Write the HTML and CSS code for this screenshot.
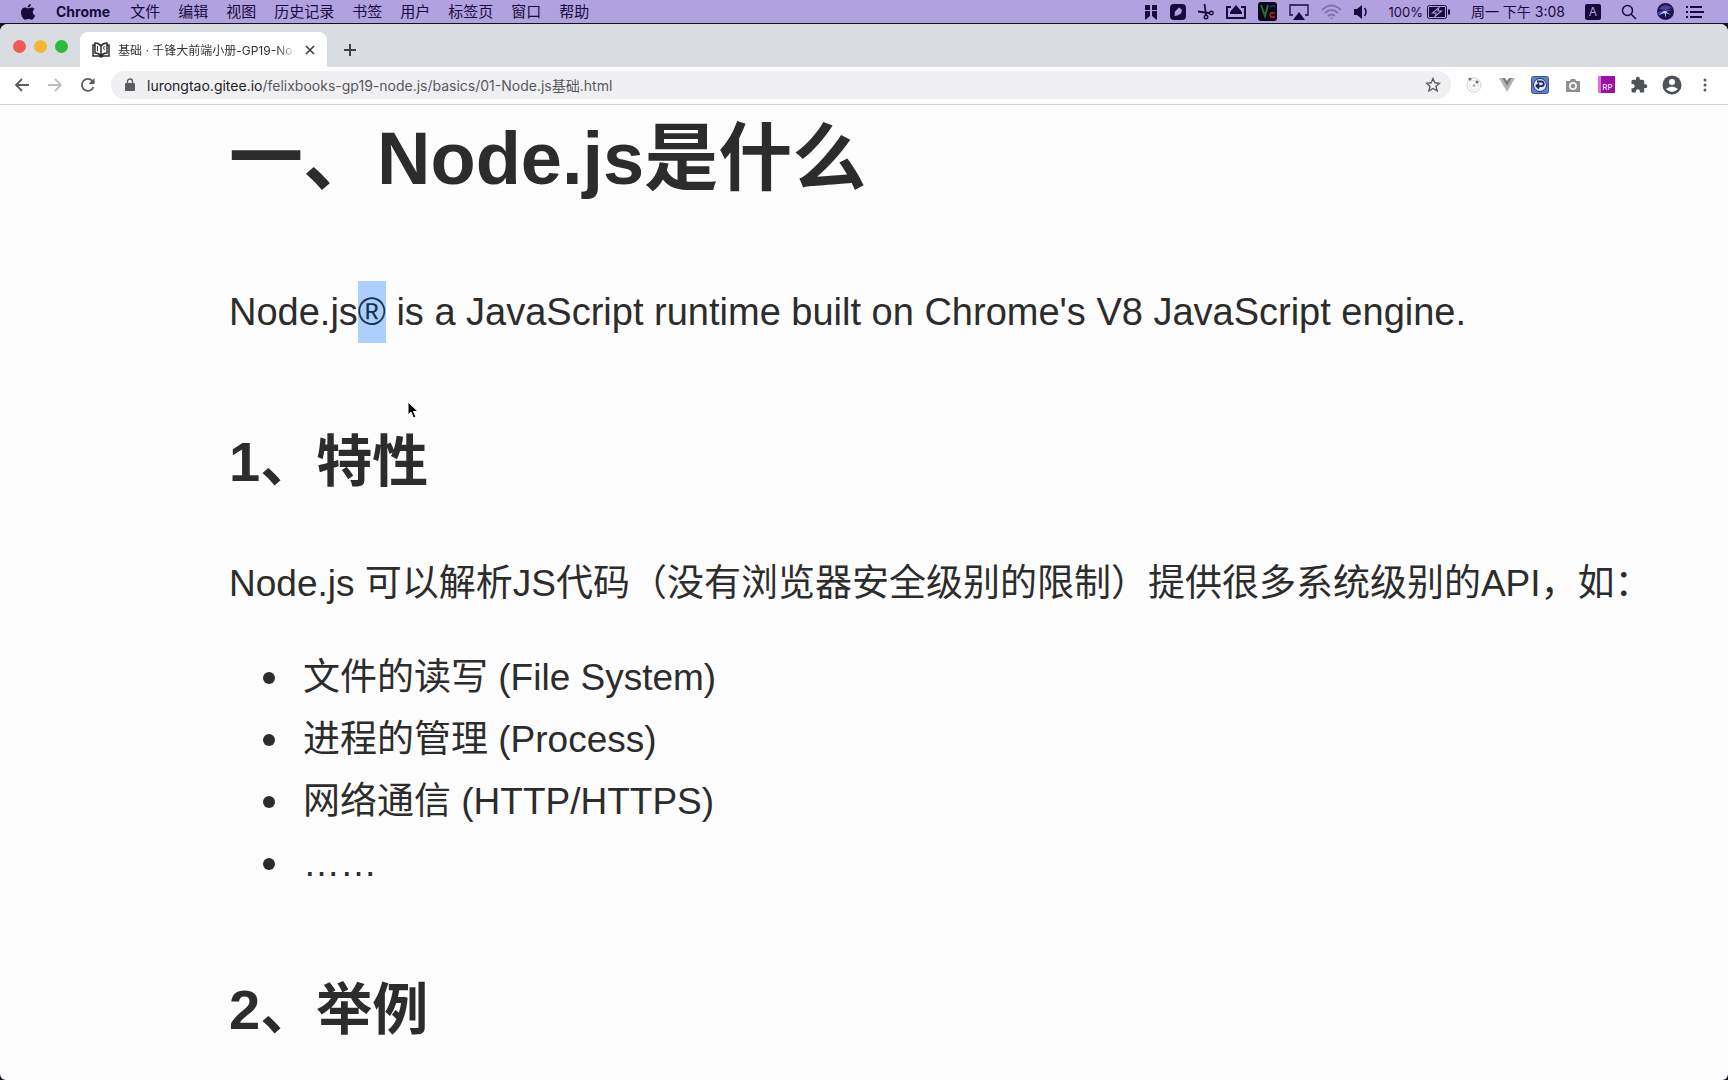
FILE: index.html
```
<!DOCTYPE html>
<html lang="zh-CN">
<head>
<meta charset="utf-8">
<title>基础 · 千锋大前端小册-GP19-Node.js</title>
<link rel="stylesheet" href="styles.css">
</head>
<body>
<header class="menubar">
  <nav class="menus" aria-label="菜单">
    <button class="apple" aria-label="Apple"><svg width="16" height="18" viewBox="0 0 16 18"><path fill="currentColor" d="M11 1c.1 1.900-1.500 3.500-3.300 3.500C7.500 2.700 9.200 1.100 11 1zM8.200 5.300c.8 0 1.800-.9 3.300-.9 1.200 0 2.400.6 3.100 1.700-2.700 1.600-2.300 5.200.5 6.300-.6 1.700-2 4.400-3.700 4.400-1.100 0-1.500-.7-3-.7s-1.900.7-3 .7C3.300 16.900 1 13 1 9.600 1 6.200 3 4.500 5 4.500c1.400 0 2.400.8 3.200.8z"/></svg></button>
    <button class="app-name">Chrome</button>
    <button>文件</button>
    <button>编辑</button>
    <button>视图</button>
    <button>历史记录</button>
    <button>书签</button>
    <button>用户</button>
    <button>标签页</button>
    <button>窗口</button>
    <button>帮助</button>
  </nav>
  <div class="tray">
    <div class="tray-icons">
      <svg width="14" height="18" viewBox="0 0 14 18"><path fill="currentColor" d="M1 2h5v5H1zM8 2h5v5H8zM1 8h5v5l-5 4zM8 8h5v9l-5-4z"/></svg>
      <svg width="16" height="16" viewBox="0 0 16 16"><rect width="16" height="16" rx="4" fill="currentColor"/><path fill="#b1a1de" d="M4.500 12l.5-4.500 4-4 3 2.500-1 3.500-3.500 2z"/></svg>
      <svg width="16" height="16" viewBox="0 0 16 16" fill="none" stroke="currentColor" stroke-width="1.800"><path d="M0 7.500l11 1.500M6.500 0L8 11"/><circle cx="13.300" cy="9" r="1.800" stroke-width="1.400"/><circle cx="8" cy="13" r="1.800" stroke-width="1.400"/></svg>
      <svg width="20" height="16" viewBox="0 0 20 16"><path d="M5 3H1v11h18V3h-4" fill="none" stroke="currentColor" stroke-width="2"/><path fill="currentColor" d="M10 1l6 7v2H4V8z"/></svg>
      <svg width="19" height="19" viewBox="0 0 19 19"><rect width="19" height="19" rx="3" fill="#0b0718"/><path d="M3 3l4 11 3-11" fill="none" stroke="#2c6b31" stroke-width="2"/><path d="M12 5q3-2 5 0" fill="none" stroke="#252577" stroke-width="2"/><path d="M17 11h-4q-2 2 0 4h4" fill="none" stroke="#8d2028" stroke-width="2"/></svg>
      <svg width="20" height="16" viewBox="0 0 20 16"><path d="M4 11H1V1h18v10h-3" fill="none" stroke="currentColor" stroke-width="1.300"/><path fill="currentColor" d="M10 8l6 8H4z"/></svg>
      <svg class="dim" width="21" height="16" viewBox="0 0 21 16" fill="none" stroke="currentColor" stroke-width="2"><path d="M1 6q9.500-9 19 0M4 9q6.500-6 13 0M7 12q3.500-3 7 0"/><circle cx="10.500" cy="14" r="1" fill="currentColor" stroke="none"/></svg>
      <svg class="volume" width="14" height="14" viewBox="0 0 14 14"><path fill="currentColor" d="M0 4h3l5-4v14l-5-4H0z"/><path d="M10.500 3q3 4 0 8" fill="none" stroke="currentColor" stroke-width="1.500"/></svg>
    </div>
    <span class="power">100%
      <svg width="24" height="14" viewBox="0 0 24 14"><rect x=".5" y=".5" width="19" height="13" rx="2" fill="none" stroke="currentColor"/><rect x="2" y="2" width="16" height="10" fill="currentColor"/><path fill="#b1a1de" d="M13 1L4 8.500h4.500L7 13l9-7.500h-4.500z"/><path fill="currentColor" d="M21 4.500h2v5h-2zM11 4L7 7.500h3L9 10l4-3.500h-3z"/></svg>
    </span>
    <time class="clock">周一 下午 3:08</time>
    <span class="input-source">A</span>
    <svg width="16" height="16" viewBox="0 0 16 16" fill="none" stroke="currentColor" stroke-width="1.500"><circle cx="6.500" cy="6.500" r="5"/><path d="M10 10l5 5"/></svg>
    <div class="tray-icons">
      <svg width="17" height="17" viewBox="0 0 17 17"><circle cx="8.500" cy="8.500" r="8.500" fill="#1d1250"/><path d="M2 6q6-7 13-1l-6 2z" fill="#5a3fa0"/><path d="M1 9l7-2-6 6z" fill="#3554b5"/><path d="M2 12l5-4 8-1-6 1.500 5 3.500-5-2 0 5-1.500-5z" fill="#c6d1f8"/></svg>
      <svg width="18" height="12" viewBox="0 0 18 12"><path fill="currentColor" d="M0 0h2v2H0zM4 0h12v2H4zM0 5h2v2H0zM4 5h14v2H4zM0 10h2v2H0zM4 10h12v2H4z"/></svg>
    </div>
  </div>
</header>

<div class="browser">
  <div class="tabstrip">
    <div class="lights">
      <button class="light red" aria-label="关闭窗口"></button>
      <button class="light yellow" aria-label="最小化"></button>
      <button class="light green" aria-label="缩放"></button>
    </div>
    <div class="tab">
      <svg width="18" height="16" viewBox="0 0 18 16" fill="none" stroke="#2d2d2d" stroke-width="1.500"><path d="M9 4Q7 1 3 1v10q4 0 6 3 2-3 6-3V1q-4 0-6 3zM9 4v10M3 3H1v11h6l2 1 2-1h6V3h-2"/><path d="M5.500 4v5M12.500 4L11.500 6l1 2" stroke-width="1"/></svg>
      <span class="tab-title">基础 · 千锋大前端小册-GP19-No</span>
      <button class="tab-close" aria-label="关闭标签页"><svg width="10" height="10" viewBox="0 0 10 10"><path d="M1 1l8 8M9 1L1 9" stroke="#3c4043" stroke-width="1.600"/></svg></button>
    </div>
    <button class="new-tab" aria-label="新标签页"><svg width="14" height="14" viewBox="0 0 14 14"><path d="M7 1v12M1 7h12" stroke="#3c4043" stroke-width="2"/></svg></button>
  </div>

  <div class="toolbar">
    <button class="tool" aria-label="后退"><svg width="14" height="14" viewBox="0 0 14 14" fill="none" stroke="#5a5d60" stroke-width="1.800"><path d="M14 7H1.500M7 1L1 7l6 6"/></svg></button>
    <button class="tool" aria-label="前进" disabled><svg width="14" height="14" viewBox="0 0 14 14" fill="none" stroke="#bcbec1" stroke-width="1.800"><path d="M0 7h12.500M7 1l6 6-6 6"/></svg></button>
    <button class="tool" aria-label="重新加载"><svg width="16" height="16" viewBox="0 0 16 16"><path d="M13.500 10A6 6 0 1 1 12.500 4L14 5.500" fill="none" stroke="#5a5d60" stroke-width="1.800"/><path d="M14.500 1v6h-6z" fill="#5a5d60"/></svg></button>
    <div class="omnibox">
      <svg width="10" height="13" viewBox="0 0 10 13"><rect y="5" width="10" height="8" rx="1" fill="#5a5d60"/><path d="M2.500 5V3.500a2.500 2.500 0 0 1 5 0V5" fill="none" stroke="#5a5d60" stroke-width="1.400"/></svg>
      <a class="url" href="#top"><span class="host">lurongtao.gitee.io</span>/felixbooks-gp19-node.js/basics/01-Node.js基础.html</a>
      <button aria-label="添加书签"><svg width="16" height="16" viewBox="0 0 16 16"><path d="M8 1.500l1.900 4.300 4.600.4-3.500 3.100 1.100 4.600L8 11.500l-4.100 2.400L5 9.300 1.500 6.200l4.600-.4z" fill="none" stroke="#5a5d60" stroke-width="1.400"/></svg></button>
    </div>
    <button class="tool" aria-label="React"><svg width="18" height="18" viewBox="0 0 18 18"><circle cx="9" cy="9" r="7" fill="none" stroke="#d2d2d2"/><circle cx="9" cy="9" r="4.500" fill="none" stroke="#dedede"/><circle cx="9" cy="9.500" r="1.600" fill="#b5b5b5"/><circle cx="5" cy="3" r="1.600" fill="#777"/><circle cx="12" cy="6" r="1.500" fill="#666"/></svg></button>
    <button class="tool" aria-label="Vue"><svg width="18" height="16" viewBox="0 0 18 16"><path d="M1 1h16L9 15z" fill="#b3b3b3"/><path d="M4.500 1h9L9 9z" fill="#7b7b7b"/><path d="M7 1h4L9 4z" fill="#fff"/></svg></button>
    <button class="tool" aria-label="同步"><svg width="18" height="18" viewBox="0 0 18 18"><rect x=".5" y=".5" width="17" height="17" rx="2" fill="#5d80cf" stroke="#40528e"/><circle cx="9" cy="9" r="6.500" fill="#dfe7fa" stroke="#1f2f69"/><path d="M6 5.500h4.500a2.300 2.300 0 0 1 0 4.600H5M8 7.500L5.500 10 8 12.500" fill="none" stroke="#18265b" stroke-width="1.800"/></svg></button>
    <button class="tool" aria-label="截图"><svg width="16" height="14" viewBox="0 0 16 14"><path d="M1 3h3.500L6 1h4l1.500 2H15v11H1z" fill="#8f8f8f"/><circle cx="8" cy="8" r="4" fill="#f5f5f5"/><circle cx="8" cy="8" r="2.200" fill="#8f8f8f"/></svg></button>
    <button class="tool" aria-label="Axure RP"><span class="rp">RP</span></button>
    <button class="tool" aria-label="扩展程序"><svg width="18" height="18" viewBox="0 0 24 24"><path fill="#4f5256" d="M20.500 11H19V7a2 2 0 0 0-2-2h-4V3.500a2.500 2.500 0 0 0-5 0V5H4a2 2 0 0 0-2 2v3.800h1.500a2.700 2.700 0 0 1 0 5.400H2V20a2 2 0 0 0 2 2h3.800v-1.500a2.700 2.700 0 0 1 5.400 0V22H17a2 2 0 0 0 2-2v-4h1.500a2.500 2.500 0 0 0 0-5z"/></svg></button>
    <button class="tool" aria-label="个人资料"><svg width="20" height="20" viewBox="0 0 20 20"><circle cx="10" cy="10" r="9.500" fill="#4f5256"/><circle cx="10" cy="7" r="3" fill="#fff"/><path d="M4 14q6-5 12 0-6 6-12 0z" fill="#fff"/></svg></button>
    <button class="tool" aria-label="更多"><svg width="4" height="16" viewBox="0 0 4 16" fill="#55585b"><circle cx="2" cy="3" r="1.500"/><circle cx="2" cy="8" r="1.500"/><circle cx="2" cy="13" r="1.500"/></svg></button>
  </div>

  <main class="page" id="top">
    <h1>一、Node.js是什么</h1>
    <p class="lead">Node.js<mark>®</mark> is a JavaScript runtime built on Chrome's V8 JavaScript engine.</p>
    <h2>1、特性</h2>
    <p>Node.js 可以解析JS代码（没有浏览器安全级别的限制）提供很多系统级别的API，如：</p>
    <ul>
      <li>文件的读写 (File System)</li>
      <li>进程的管理 (Process)</li>
      <li>网络通信 (HTTP/HTTPS)</li>
      <li>……</li>
    </ul>
    <h2>2、举例</h2>
  </main>
</div>
<svg class="cursor" width="12" height="18" viewBox="0 0 12 18"><path d="M1 1v13l3-3 2.500 6 2.500-1-2.500-5.500H11z" fill="#000" stroke="#fff"/></svg>
</body>
</html>
```
FILE: styles.css
```
* { box-sizing: border-box; }
body {
  margin: 0;
  height: 100vh;
  overflow: hidden;
  display: flex;
  flex-direction: column;
  background: #14101f;
  font-family: Inter, "Noto Sans CJK SC", sans-serif;
}
button {
  margin: 0;
  padding: 0;
  border: 0;
  background: none;
  font: inherit;
  color: inherit;
  display: flex;
  align-items: center;
  justify-content: center;
}
svg { display: block; flex: none; }

.menubar {
  height: 23px;
  flex: none;
  display: flex;
  align-items: center;
  justify-content: space-between;
  padding: 0 24px 0 20px;
  background: #b1a1de;
  color: #170a3c;
  font-size: 15px;
  line-height: 22px;
  white-space: nowrap;
}
.menus { display: flex; align-items: center; gap: 18px; }
.app-name { padding: 0 2px; font-weight: 700; font-size: 14px; }
.tray { display: flex; align-items: center; gap: 20px; }
.tray-icons { display: flex; align-items: center; gap: 12px; }
.dim { opacity: .3; }
.power { display: flex; align-items: center; gap: 4px; font-size: 13px; }
.clock { font-size: 14px; }
.input-source {
  width: 16px;
  height: 16px;
  border-radius: 2px;
  background: #170a3c;
  color: #b1a1de;
  font-size: 12px;
  line-height: 16px;
  text-align: center;
}

.browser {
  flex: 1;
  min-height: 0;
  margin-top: 1px;
  display: flex;
  flex-direction: column;
  overflow: hidden;
  border-radius: 8px 8px 6px 6px;
  background: #fdfdfd;
}
.tabstrip {
  height: 43px;
  flex: none;
  display: flex;
  align-items: flex-end;
  background: #d9dde1;
}
.lights { display: flex; gap: 8px; padding: 0 12px 14px 13px; }
.light { width: 13px; height: 13px; border-radius: 50%; }
.red { background: #f25a56; }
.yellow { background: #f6b62f; }
.green { background: #2bbb41; }
.tab {
  width: 247px;
  height: 35px;
  display: flex;
  align-items: center;
  gap: 8px;
  padding: 0 12px;
  border-radius: 8px 8px 0 0;
  background: #fff;
}
.tab-title {
  flex: 1;
  min-width: 0;
  overflow: hidden;
  white-space: nowrap;
  font-size: 12px;
  color: #2f3236;
  -webkit-mask-image: linear-gradient(to right, #000 88%, transparent);
  mask-image: linear-gradient(to right, #000 88%, transparent);
}
.new-tab { height: 35px; padding: 0 16px; }

.toolbar {
  height: 38px;
  flex: none;
  display: flex;
  align-items: center;
  padding: 0 13px 2px 12px;
  gap: 13px;
  background: #fff;
  border-bottom: 1px solid #d0d0d0;
}
.tool { width: 20px; height: 20px; flex: none; }
.omnibox {
  flex: 1;
  height: 28px;
  display: flex;
  align-items: center;
  gap: 12px;
  padding: 0 10px 0 14px;
  border-radius: 14px;
  background: #f0f0f3;
}
.url { flex: 1; font-size: 14px; color: #56595d; text-decoration: none; white-space: nowrap; }
.host { color: #1f2124; }
.rp {
  width: 17px;
  height: 17px;
  padding-top: 6px;
  border-left: 3px solid #e070e0;
  background: #9b10a5;
  color: #fff;
  font-size: 8px;
  line-height: 10px;
}

.page {
  padding: 0 0 0 229px;
  color: #2c2c2c;
  font-family: "Liberation Sans", "Noto Sans CJK SC", sans-serif;
  font-size: 37px;
  line-height: 62px;
}
.page h1 { margin: 0; padding: 5px 0 74px; font-size: 74px; line-height: 97px; }
.page h2 { margin: 0; padding: 77px 0 53px; font-size: 56px; line-height: 76px; }
.page p { margin: 0 0 4px; white-space: nowrap; }
.page .lead { font-size: 38px; }
.page ul { margin: 32px 0 0; padding: 0 0 0 34px; list-style: none; }
.page li { display: flex; align-items: center; gap: 28px; }
.page li::before {
  content: "";
  width: 12px;
  height: 12px;
  border-radius: 50%;
  background: #2c2c2c;
}
mark { display: inline-block; background: #acd0fb; color: #16304f; vertical-align: top; }

.cursor { position: absolute; left: 407px; top: 401px; }
```
